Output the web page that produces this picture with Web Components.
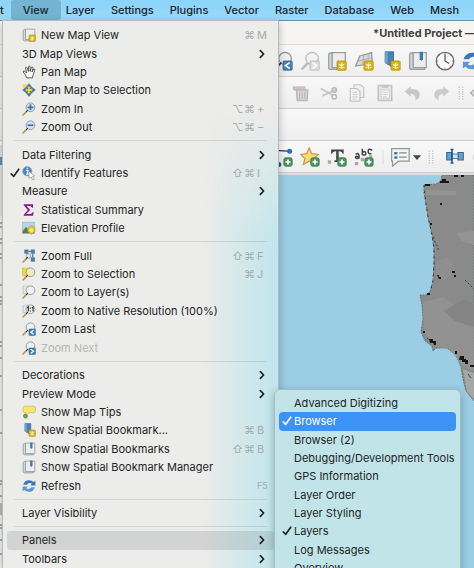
<!DOCTYPE html>
<html lang="en">
<head>
<meta charset="utf-8">
<title>Untitled Project</title>
<style>
html,body{margin:0;height:100%;overflow:hidden}
body{font-family:Inter,"Noto Sans","DejaVu Sans",sans-serif;font-size:11px;color:#222}
</style>
</head>
<body>
<app-window></app-window>
<script>
const plusBadge='<rect x="13" y="13" width="10" height="10" rx="2" fill="#4b9560" stroke="#39784b"/><path d="M18 15v6M15 18h6" stroke="#fff" stroke-width="2"/>';
const newBadge='<rect x="12" y="12" width="11" height="11" rx="1" fill="#d7b51e" stroke="#b59410"/><path d="M17.500 14v7.500M14.500 16l6 4M20.500 16l-6 4" stroke="#fff6b0" stroke-width="1.500"/>';
const handle='<path d="M10 14L5 19" stroke="#333" stroke-width="2"/><path d="M6 18L2 22" stroke="#b99f5c" stroke-width="3" stroke-linecap="round"/>';
const lens='<circle cx="14.500" cy="9" r="7.500" fill="#eef1f1" stroke="#8d9399" stroke-width="1.500"/>';
const blueBadge='<rect x="12" y="12" width="11" height="11" rx="1" fill="#4b7fb3" stroke="#376a9b"/>';
const sheet='<path d="M6 2H22V20H6z" fill="#eceeee" stroke="#9a9ea0" stroke-width="1.500"/><path d="M6 2Q2 2 2 5V20Q2 22 5 22H20V20H6Q6 18 6 17z" fill="#d4d7d8" stroke="#9a9ea0" stroke-width="1.500"/>';
const ICONS={
 newmap:sheet+newBadge,
 map3d:'<path d="M7 6L21 2L22 15L2 18z" fill="#d8dadb" stroke="#929698" stroke-width="1.500"/><path d="M5 12L22 8M12 5L10 17M17 3V16" stroke="#a5a9ab"/>'+newBadge,
 hand:'<path d="M8 22L6 17L2 12Q2 9 5 11L8 14L6 5Q7 2 9 5L11 11V3Q12 0 14 3L14 11L16 4Q18 2 19 5L17 12L20 7Q23 6 22 9L19 17L18 22z" fill="#fff" stroke="#444" stroke-width="1.500" stroke-linejoin="round"/>',
 pansel:'<path d="M12 5L19 12L12 19L5 12z" fill="#f2df3d"/><path d="M1 2H8V8H1z" fill="#f2df3d"/><path d="M12 1L16 6H8zM12 23L8 18H16zM1 12L6 8V16zM23 12L18 16V8z" fill="#4b6f99" stroke="#4b6f99"/><path d="M7 7L10 10M14 14L17 17M17 7L14 10M10 14L7 17" stroke="#55697a" stroke-width="3"/>',
 zoomin:lens.replace('#eef1f1','#d5e2f1')+handle+'<path d="M14.500 4V14M9.500 9H19.500" stroke="#3f73aa" stroke-width="3"/>',
 zoomout:lens.replace('#eef1f1','#d5e2f1')+handle+'<path d="M9.500 9H19.500" stroke="#3f73aa" stroke-width="3"/>',
 identify:'<circle cx="9" cy="9" r="8" fill="#4f86bd" stroke="#8ba9c6"/><path d="M9 3v3M7 8h3v6M7 14h5" fill="none" stroke="#fff" stroke-width="2"/><path d="M12 9L22 17L18 18L21 23L18 24L16 19L12 21z" fill="#fff" stroke="#777"/>',
 sigma:'<path d="M3 2H19V8H17Q17 5 13 5H8L14 12L7 19H14Q17 19 18 16H20L19 22H3V20L10 12L3 4z" fill="#8f198f"/>',
 elevation:'<rect x="1" y="2" width="20" height="19" fill="#b9d5e8" stroke="#9aa9b2"/><path d="M1 17L7 10L11 15L16 8L21 13V21H1z" fill="#5c7e55"/><path d="M16 8L22 11V18L16 23L10 18V12z" fill="#e9c93e" stroke="#a78e22"/><circle cx="16" cy="16" r="3" fill="#f8e98d"/>',
 zoomfull:'<path d="M4 1H11V8H4zM15 1H22V8H15zM15 14H22V22H15z" fill="#4f7cab"/><path d="M11 4H15M18.500 8V14" stroke="#526c88" stroke-width="2"/><circle cx="11" cy="12" r="4" fill="#dfe4e6" stroke="#6f7b83"/>'+handle,
 zoomsel:'<path d="M1 2H12V15H1z" fill="#f3dc2e" stroke="#cdb725"/>'+lens.replace('#eef1f1','#f1e9b8')+handle,
 zoomlayer:'<path d="M2 2H11V15H2z" fill="#e5e7e7" stroke="#a8acae"/>'+lens+handle,
 zoomnative:'<path d="M2 2H11V15H2z" fill="#e5e7e7" stroke="#a8acae"/>'+lens+handle+'<path d="M9 7L11 5V13M17 7L19 5V13" fill="none" stroke="#333" stroke-width="2"/><path d="M14.500 6v2M14.500 11v2" stroke="#333" stroke-width="2"/>',
 zoomlast:lens+handle+blueBadge+'<path d="M20 14L15 17.500L20 21" fill="none" stroke="#fff" stroke-width="2"/>',
 zoomnext:lens+handle+blueBadge+'<path d="M15 14L20 17.500L15 21" fill="none" stroke="#fff" stroke-width="2"/>',
 zoomnextoff:'<circle cx="14.500" cy="9" r="7.500" fill="#f3f3f3" stroke="#bbb" stroke-width="1.500"/><path d="M10 14L2 22" stroke="#bbb" stroke-width="3"/><rect x="12" y="12" width="11" height="11" rx="1" fill="#ddd" stroke="#b5b5b5"/><path d="M15 14L20 17.500L15 21" fill="none" stroke="#fff" stroke-width="2"/>',
 tips:'<path d="M5 2H20Q23 2 23 5V10Q23 13 20 13H12L6 18V13H5Q2 13 2 10V5Q2 2 5 2z" fill="#f7e66e" stroke="#bfae3c"/><circle cx="6" cy="19" r="3.500" fill="#7e9d62" stroke="#55713f"/>',
 bookmark:'<path d="M5 1H15V21L10 17L5 14z" fill="#4982b6" stroke="#306494"/><path d="M5 1H8V16L5 14z" fill="#76a4cd"/>'+newBadge,
 showbook:sheet+'<path d="M14 1H18V10L16 12L14 10z" fill="#3c77ad"/>',
 refresh:'<path d="M2 10Q4 2 12 2Q17 2 20 5L23 3V11H14L17 8Q12 5 8 10z" fill="#3977b8"/><path d="M22 14Q20 22 12 22Q7 22 4 19L1 21V13H10L7 16Q12 19 16 14z" fill="#5c98d2"/>',
 clock:'<circle cx="12" cy="12" r="10.500" fill="#fafafa" stroke="#666" stroke-width="1.500"/><path d="M12 4V12L17 15" fill="none" stroke="#555" stroke-width="1.500"/><path d="M12 2v2M12 20v2M2 12h2M20 12h2M5 5l1 1M18 18l1 1M5 19l1-1M18 6l1-1" stroke="#777"/>',
 trash:'<path d="M1 3H18V8H1z" fill="#b0aaaa"/><path d="M3 8H22M6 8L7 22H20L21 8z" fill="#cfc5c5" stroke="#a89898" stroke-width="2"/><path d="M10 11V20M13.500 11V20M17 11V20" stroke="#a89898" stroke-width="1.500"/>',
 cut:'<path d="M1 6L17 15M3 16L22 7" stroke="#aaa" stroke-width="2"/><circle cx="19" cy="8" r="3" fill="none" stroke="#999" stroke-width="2"/><circle cx="19" cy="17" r="3" fill="none" stroke="#999" stroke-width="2"/>',
 copy:'<path d="M8 1H17L21 5V18H8z" fill="#eee" stroke="#aaa" stroke-width="1.500"/><path d="M3 6H12L16 10V23H3z" fill="#f2f2f2" stroke="#a5a5a5" stroke-width="1.500"/><path d="M6 11h6M6 14h7M6 17h7M6 20h5" stroke="#aaa"/>',
 paste:'<path d="M3 2H21V22H3z" fill="#ddd" stroke="#aaa" stroke-width="2"/><path d="M8 1H16V5H8z" fill="#aaa"/><path d="M7 8H18V19H7z" fill="#f4f4f4" stroke="#b5b5b5"/><path d="M9 11h7M9 14h7M9 17h5" stroke="#aaa"/>',
 undo:'<path d="M1 10L9 3V7Q21 6 21 14Q21 19 15 22Q17 14 9 13V17z" fill="#b7afaf"/>',
 redo:'<path d="M23 10L15 3V7Q3 6 3 14Q3 19 9 22Q7 14 15 13V17z" fill="#b5b8b5"/>',
 edge:'<path d="M18 3v3M18 8v3M18 13v3M18 18v3" stroke="#aaa" stroke-width="3"/>',
 line:'<path d="M2 4L18 5" stroke="#333" stroke-width="1.500"/><circle cx="20" cy="5" r="3" fill="#2670b5"/><circle cx="7" cy="21" r="3" fill="#2456a8"/>'+plusBadge,
 star:'<path d="M11 1L14 8L22 9L16 14L18 21L11 17L4 21L6 14L1 9L8 8z" fill="#f8dc73" stroke="#c79b45" stroke-width="1.500"/>'+plusBadge,
 text:'<path d="M5 3H20V8H19Q18 5 15 5H14V16H16V18H9V16H11V5H10Q7 5 6 8H5z" fill="#444"/><path d="M1 16h4v4H1z" fill="#aaa"/>'+plusBadge,
 abc:'<path d="M2 9Q5 6 6 10V14M6 12Q1 10 2 13Q4 15 6 12M10 2V9Q15 11 14 7Q13 4 10 7M22 4Q17 1 17 5Q17 9 21 8" fill="none" stroke="#444" stroke-width="1.800"/><path d="M1 18h4v4H1zM8 13h4v4H8zM18 10h4v4h-4z" fill="#aaa"/>'+plusBadge,
 label:'<path d="M2 2H23V17H10L3 23V17H2z" fill="#f4f5f5" stroke="#93989b" stroke-width="1.500"/><path d="M11 7h9M11 12h9" stroke="#888" stroke-width="1.500"/><path d="M5 6h4v3H5zM5 11h4v3H5z" fill="#527d9c"/>',
 caret:'<path d="M5 9H19L12 17z" fill="#444"/>',
 grip:'<path d="M9 1V23M15 1V23" stroke="#bbb" stroke-width="2" stroke-dasharray="2 2"/>',
 rule:'<path d="M12 0V24" stroke="#c9cccd"/>',
 move:'<path d="M1 6H8V16H1zM16 6H23V16H16z" fill="#6ba0cf" stroke="#33678f" stroke-width="1.500"/><path d="M8 8H16V14H8z" fill="#cfe2ef" stroke="#33678f"/><path d="M8 2V20M6 2h4M6 20h4" stroke="#24537b" stroke-width="2"/>',
 target:'<circle cx="12" cy="12" r="9" fill="none" stroke="#bbb" stroke-width="3"/><path d="M1 12H23" stroke="#ccc" stroke-width="3"/>',
 diamond:'<path d="M12 4L20 12L12 20L3 12z" fill="#ddd" stroke="#aaa" stroke-width="1.500"/>',
 check:'<path d="M3 14L9 20L21 3" fill="none" stroke="currentColor" stroke-width="4" stroke-linecap="round" stroke-linejoin="round"/>',
 chevron:'<path d="M8 4L16 12L8 20" fill="none" stroke="#1c2022" stroke-width="4" stroke-linecap="round" stroke-linejoin="round"/>'
};
const define=(name,render)=>customElements.define(name,class extends HTMLElement{
 connectedCallback(){ if(!this.shadowRoot) this.attachShadow({mode:'open'}).innerHTML=render(this); }
});

define('ui-icon',el=>`<style>:host{display:block;flex:none;width:var(--icon,14px);height:var(--icon,14px)}svg{display:block;width:100%;height:100%}</style>
<svg viewBox="0 0 24 24" aria-hidden="true">${ICONS[el.getAttribute('name')]||''}</svg>`);

define('menu-bar',()=>`<style>
:host{display:block;height:20px;background:linear-gradient(#8bd3f8,#9adafb);border-bottom:1px solid #5c95ae;overflow:hidden}
nav{display:flex;height:100%;align-items:stretch}
button{all:unset;flex:none;padding:0 8px;font-weight:500;font-size:11px;line-height:20px;color:#16252e}
button:first-child{padding-left:0;padding-right:7px}
button[aria-expanded]{background:#75b3d3;border-radius:3px;padding:0 12px;margin-right:-3px}
</style><nav aria-label="Main menu"><button>t</button><button aria-expanded="true">View</button>${['Layer','Settings','Plugins','Vector','Raster','Database','Web','Mesh'].map(t=>`<button>${t}</button>`).join('')}</nav>`);

define('title-bar',()=>`<style>:host{display:flex;align-items:center;height:23px;background:#f6f5f2;border-bottom:1px solid #dcdcda;padding-left:373px;font-weight:700;font-size:11px;color:#414141;white-space:nowrap}</style><slot></slot>`);

define('tool-bar',()=>`<style>:host{display:flex;box-sizing:border-box;align-items:center;gap:7px;height:32px;padding-left:273px;background:linear-gradient(#f8f8f8,#eeeeee);border-bottom:1px solid #cbcbcb;overflow:hidden}</style><slot></slot>`);

define('tool-button',el=>`<style>:host{display:block;flex:none;--icon:20px}:host([small]){--icon:18px;padding:0 1px}:host([narrow]){--icon:14px}:host([off]){opacity:.65}button{all:unset;display:block}</style>
<button aria-label="${el.getAttribute('icon')}"><ui-icon name="${el.getAttribute('icon')}"></ui-icon></button>`);

define('map-canvas',()=>`<style>:host{display:flex;justify-content:flex-end;flex:1;min-height:0;background:#9bcde4;border-top:2px solid #dcdedf;overflow:hidden}svg{display:block;flex:none;width:94px;height:392px}</style>
<svg viewBox="380 176 94 392" role="img" aria-label="Coastline raster">
<path d="M474 176H442L441 182L436 185L424 186L424 194L426 205L428 218L432 236L434 250L434 265L433 282L430 293L426 296L420 296L422 306L423 320L421 333L425 342L432 347L433 352L436 349L447 349L456 356L461 368L463 380L466 392L474 402z" fill="#8a8a8a" stroke="#6d6f6f" stroke-width="1" stroke-dasharray="2 1"/>
<path d="M425 191L456 192V196L426 196zM457 234L474 232V246L461 242z" fill="#949494"/>
<path d="M436 262L450 258L456 272L444 282L436 276z" fill="#8f8f8f"/>
<path d="M423 303L444 298L462 312L474 326V372L462 367L450 350L436 348L424 334z" fill="#959595" opacity=".7"/>
<path d="M444 312L464 300L474 305V328L455 322z" fill="#858585"/>
<path d="M463 370L474 374V400L467 393z" fill="#a5a6a6"/>
<path d="M424 186L426 205L428 218L432 236L434 250L434 265L433 282L430 293" fill="none" stroke="#343434" stroke-dasharray="2 4"/>
<path d="M433 238L439 252M465 281L474 290M427 339L436 347" stroke="#3a3a3a" stroke-dasharray="2 2"/>
<path d="M425 185h5v2h-5zM442 180h4v2h3v2h-9v-2h2zM454 176h4v2h-4zM461 176h3v2h-3zM440 204h2v2h-2zM430 224h2v2h-2zM452 272h3v2h-3zM454 276h2v2h-2zM437 276h2v2h2v2h-2zM427 294h3v2h-3zM423 332h2v2h-2zM429 340h4v2h3v4h-2v-2h-4zM455 352h2v3h-2zM460 357h4v3h2v3h-4v-2h-3zM465 361h3v4h-3zM470 366h4v2h-4z" fill="#171717"/>
<path d="M468 375l3 4" stroke="#444"/>
</svg>`);

define('menu-item',el=>{
 const a=n=>el.getAttribute(n), keys=a('keys');
 return `<style>
:host{display:flex;flex:1 0 18px;min-height:18px;margin:0 4px;color:#232526}
button{all:unset;display:grid;grid-template-columns:15px auto 1fr auto;align-items:center;width:100%;border-radius:4px;line-height:16px;white-space:nowrap;font-size:11px}
.mark{--icon:10px;padding-left:3px}.pic{padding-right:5px}
.end{grid-column:4;display:flex;align-items:center;padding-right:7px;--icon:10px;color:#a5acad}
kbd{font:inherit;width:12px}kbd:last-child{width:10px;padding-left:1px}
.small{font-size:9px}
:host([off]){color:#b4b6b6}
:host([open]) button{background:rgba(130,140,142,.25)}
:host([selected]) button{background:#3d92f8;color:#fff}
:host([sub]) button{grid-template-columns:15px auto 1fr}
</style><button role="menuitem" ${el.hasAttribute('off')?'disabled':''}>
<span class="mark">${el.hasAttribute('checked')?'<ui-icon name="check"></ui-icon>':''}</span>
<span class="pic" ${a('icon')?'':'hidden'}>${a('icon')?`<ui-icon name="${a('icon')}"></ui-icon>`:''}</span>
<span style="grid-column:${a('icon')?3:'2 / 4'}"><slot></slot></span>
${keys?`<span class="end ${keys==='F5'?'small':''}">${keys.split(' ').map(k=>`<kbd>${k}</kbd>`).join('')}</span>`:''}
${el.hasAttribute('more')?'<span class="end"><ui-icon name="chevron"></ui-icon></span>':''}
</button>`;});

define('menu-rule',()=>`<style>:host{display:flex;flex:none;align-items:center;height:9px;padding:0 11px}hr{flex:1;border:0;height:1px;margin:0;background:rgba(110,130,130,.2)}</style><hr>`);

define('menu-panel',()=>`<style>
:host{position:absolute;display:flex;flex-direction:column;box-sizing:border-box;z-index:1;padding-top:5px;background:#ececea;border:1px solid #b6babb;box-shadow:0 3px 8px rgba(0,0,0,.25)}
:host(.main){top:20px;left:2px;width:277px;bottom:0;border-bottom:0;isolation:isolate}
:host(.main)::before{content:"";position:absolute;z-index:-1;inset:90px 0 0 73%;background:linear-gradient(90deg,transparent,rgba(191,229,235,.55) 50%,#bfe5eb);-webkit-mask-image:linear-gradient(transparent,#000 130px);mask-image:linear-gradient(transparent,#000 130px)}
:host(.sub){top:389px;left:274px;width:187px;bottom:-10px;padding-top:4px;background:#c1e4e9;border-color:#9dbfca;border-radius:6px 6px 0 0;z-index:2}
</style><slot></slot>`);

define('side-edge',()=>`<style>:host{position:absolute;left:0;top:145px;bottom:0;width:3px;background:#f3f3f3}svg{display:block;width:3px;height:423px}</style>
<svg viewBox="0 145 3 423"><path d="M0 145H3V216H0z" fill="#e4e4e4"/><path d="M0 157h3v8H0z" fill="#6a8fae"/><path d="M0 223h2M0 227h2M0 239h2M0 243h2M0 254h2M0 258h2M0 285h2M0 297h2M0 301h2M0 304h2M0 342h2M0 346h2M0 358h2M0 376h2M0 410h3M0 433h3M0 481h2M0 484h2M0 496h2M0 525h2M0 528h2M0 540h2M0 554h2" stroke="#666"/><path d="M0 503h3v12H0z" fill="#bbb"/></svg>`);

const item=(label,o='')=>`<menu-item ${o}>${label}</menu-item>`;
const tools=(...n)=>n.map(x=>{const [i,o='']=x.split(':');return `<tool-button icon="${i}" ${o}></tool-button>`}).join('');
define('app-window',()=>`<style>:host{display:flex;flex-direction:column;position:relative;height:100vh;overflow:hidden}
.edit{gap:8px;padding-left:263px}
.extras{display:flex;align-items:center;margin-left:-5px}</style>
<menu-bar></menu-bar>
<title-bar>*Untitled Project —</title-bar>
<tool-bar>${tools('zoomlast','zoomnextoff','newmap','map3d','bookmark','showbook','clock','refresh')}</tool-bar>
<tool-bar class="edit">${tools('edge:small off','trash:small off','cut:small off','copy:small off','paste:small off','undo:small off','redo:small off')}<span class="extras">${tools('grip:narrow','diamond')}</span></tool-bar>
<tool-bar></tool-bar>
<tool-bar class="notes">${tools('line','star','text','abc')}<span class="extras">${tools('rule:narrow','label','caret:narrow','grip:narrow')}</span>${tools('move:small','target:off')}</tool-bar>
<map-canvas></map-canvas>
<side-edge></side-edge>
<menu-panel class="main" role="menu">
${item('New Map View','icon="newmap" keys="⌘ M"')}${item('3D Map Views','more')}${item('Pan Map','icon="hand"')}${item('Pan Map to Selection','icon="pansel"')}${item('Zoom In','icon="zoomin" keys="⌥ ⌘ +"')}${item('Zoom Out','icon="zoomout" keys="⌥ ⌘ −"')}
<menu-rule></menu-rule>
${item('Data Filtering','more')}${item('Identify Features','icon="identify" checked keys="⇧ ⌘ I"')}${item('Measure','more')}${item('Statistical Summary','icon="sigma"')}${item('Elevation Profile','icon="elevation"')}
<menu-rule></menu-rule>
${item('Zoom Full','icon="zoomfull" keys="⇧ ⌘ F"')}${item('Zoom to Selection','icon="zoomsel" keys="⌘ J"')}${item('Zoom to Layer(s)','icon="zoomlayer"')}${item('Zoom to Native Resolution (100%)','icon="zoomnative"')}${item('Zoom Last','icon="zoomlast"')}${item('Zoom Next','icon="zoomnext" off')}
<menu-rule></menu-rule>
${item('Decorations','more')}${item('Preview Mode','more')}${item('Show Map Tips','icon="tips"')}${item('New Spatial Bookmark...','icon="bookmark" keys="⌘ B"')}${item('Show Spatial Bookmarks','icon="showbook" keys="⇧ ⌘ B"')}${item('Show Spatial Bookmark Manager','icon="showbook"')}${item('Refresh','icon="refresh" keys="F5"')}
<menu-rule></menu-rule>
${item('Layer Visibility','more')}
<menu-rule></menu-rule>
${item('Panels','more open')}${item('Toolbars','more')}
</menu-panel>
<menu-panel class="sub" role="menu">
${item('Advanced Digitizing','sub')}${item('Browser','sub checked selected')}${item('Browser (2)','sub')}${item('Debugging/Development Tools','sub')}${item('GPS Information','sub')}${item('Layer Order','sub')}${item('Layer Styling','sub')}${item('Layers','sub checked')}${item('Log Messages','sub')}${item('Overview','sub')}
</menu-panel>`);
</script>
</body>
</html>
